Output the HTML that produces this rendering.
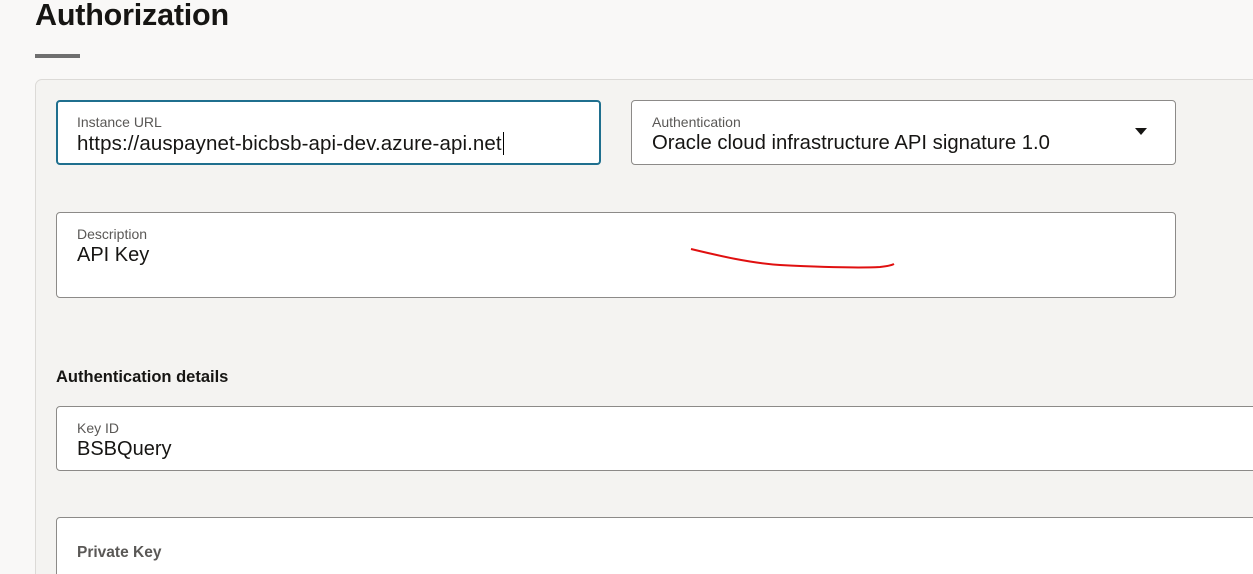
<!DOCTYPE html>
<html><head><style>
html,body{margin:0;width:1253px;height:574px;overflow:hidden}
body{background:#f9f8f7;font-family:"Liberation Sans",sans-serif;position:relative;color:#161513}
.h1{position:absolute;left:35px;top:-2px;font-size:30.5px;font-weight:bold;letter-spacing:-0.2px}
.bar{position:absolute;left:35px;top:54px;width:45px;height:4px;background:#6f6f6f}
.panel{position:absolute;left:35px;top:79px;width:1240px;height:520px;background:#f4f3f1;border:1px solid #dcdad7;border-radius:7px}
.f{position:absolute;background:#fff;border:1px solid #8c8a88;border-radius:4px;box-sizing:border-box}
.f .l{position:absolute;left:20px;top:13px;font-size:14px;color:#5a5856}
.f .v{position:absolute;left:20px;top:31px;font-size:20px;color:#161513}
.sec{position:absolute;left:56px;top:368px;font-size:16.5px;font-weight:bold}
</style></head><body>
<div class="h1">Authorization</div>
<div class="bar"></div>
<div class="panel"></div>
<div class="f" style="left:56px;top:100px;width:545px;height:65px;border:2px solid #1f6f8e;"><div class="l" style="left:19px;top:12px">Instance URL</div><div class="v" style="left:19px;top:30px;font-size:20.5px;letter-spacing:0.1px">https://auspaynet-bicbsb-api-dev.azure-api.net<span style="border-left:1px solid #000;margin-left:1px"></span></div></div>
<div class="f" style="left:631px;top:100px;width:545px;height:65px;"><div class="l">Authentication</div><div class="v" style="font-size:20.3px">Oracle cloud infrastructure API signature 1.0</div>
<svg style="position:absolute;left:503px;top:27px" width="12" height="8"><path d="M0 0H12L6 7Z" fill="#161513"/></svg></div>
<div class="f" style="left:56px;top:212px;width:1120px;height:86px;"><div class="l">Description</div><div class="v">API Key</div></div>
<svg style="position:absolute;left:0;top:0" width="1253" height="574"><path d="M691 249C720 256 750 263 780 265C820 267 860 268 880 267Q890 266 894 264" stroke="#e01010" stroke-width="2" fill="none"/></svg>
<div class="sec">Authentication details</div>
<div class="f" style="left:56px;top:406px;width:1220px;height:65px;"><div class="l">Key ID</div><div class="v">BSBQuery</div></div>
<div class="f" style="left:56px;top:517px;width:1220px;height:80px;"><div class="l" style="top:26px;font-size:15.5px;font-weight:bold;color:#5a5856">Private Key</div></div>
</body></html>
